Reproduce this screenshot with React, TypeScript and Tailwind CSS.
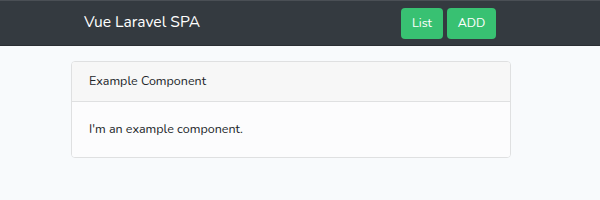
export default function App() {
  return (
    <div
      className="min-h-[200px] w-[600px] bg-[#f8fafc] text-[#212529]"
      style={{ fontFamily: 'Nunito, Lato, "Noto Sans", sans-serif' }}
    >
      <nav className="flex h-[46px] items-center border-b border-[#2a2e33] border-t border-t-[#4a4f55] bg-[#343a40] pl-[84px] pr-[104px]">
        <span className="text-[15.6px] leading-none text-white">Vue Laravel SPA</span>
        <div className="ml-auto flex gap-[4px]">
          <button className="h-[31px] w-[42px] rounded-[4px] bg-[#38c172] text-[12.5px] text-white">
            List
          </button>
          <button className="h-[31px] w-[49px] rounded-[4px] bg-[#38c172] text-[12.5px] text-white">
            ADD
          </button>
        </div>
      </nav>
      <div className="pl-[71px] pt-[15px]">
        <div className="w-[440px] overflow-hidden rounded-[4px] border border-[#dfe0e1] bg-white">
          <div className="flex h-[40px] items-center border-b border-[#dfe0e1] bg-[#f7f7f7] px-[17px] text-[12.5px]">
            Example Component
          </div>
          <div className="flex h-[55px] items-center bg-[#fcfcfd] px-[17px] text-[12.5px]">
            I'm an example component.
          </div>
        </div>
      </div>
    </div>
  );
}
